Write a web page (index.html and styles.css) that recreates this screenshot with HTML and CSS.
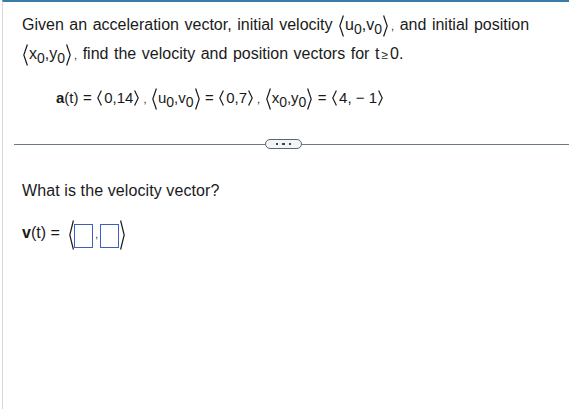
FILE: index.html
```html
<!DOCTYPE html>
<html>
<head>
<meta charset="utf-8">
<link rel="stylesheet" href="styles.css">
</head>
<body>
<div class="frame">
  <div class="question">
    <p class="intro">Given an acceleration vector, initial velocity <span class="vec"><svg class="br" viewBox="0 0 5 22"><polyline points="4.4,0.5 0.8,11 4.4,21.5"/></svg><span class="m">u<sub>0</sub>,v<sub>0</sub></span><svg class="br" viewBox="0 0 5 22"><polyline points="0.6,0.5 4.2,11 0.6,21.5"/></svg></span><span class="cm">,</span> and initial position<br><span class="vec"><svg class="br" viewBox="0 0 5 22"><polyline points="4.4,0.5 0.8,11 4.4,21.5"/></svg><span class="m">x<sub>0</sub>,y<sub>0</sub></span><svg class="br" viewBox="0 0 5 22"><polyline points="0.6,0.5 4.2,11 0.6,21.5"/></svg></span><span class="cm">,</span> find the velocity and position vectors for t<span class="ge">≥</span>0.</p>
    <p class="eq"><b>a</b>(t) = <span class="vec"><svg class="br sm" viewBox="0 0 5 16"><polyline points="4.4,0.5 0.8,8 4.4,15.5"/></svg>0,14<svg class="br sm" viewBox="0 0 5 16"><polyline points="0.6,0.5 4.2,8 0.6,15.5"/></svg></span><span class="cm">,</span> <span class="vec"><svg class="br" viewBox="0 0 5 22"><polyline points="4.4,0.5 0.8,11 4.4,21.5"/></svg><span class="m">u<sub>0</sub>,v<sub>0</sub></span><svg class="br" viewBox="0 0 5 22"><polyline points="0.6,0.5 4.2,11 0.6,21.5"/></svg></span> = <span class="vec"><svg class="br sm" viewBox="0 0 5 16"><polyline points="4.4,0.5 0.8,8 4.4,15.5"/></svg>0,7<svg class="br sm" viewBox="0 0 5 16"><polyline points="0.6,0.5 4.2,8 0.6,15.5"/></svg></span><span class="cm">,</span> <span class="vec"><svg class="br" viewBox="0 0 5 22"><polyline points="4.4,0.5 0.8,11 4.4,21.5"/></svg><span class="m">x<sub>0</sub>,y<sub>0</sub></span><svg class="br" viewBox="0 0 5 22"><polyline points="0.6,0.5 4.2,11 0.6,21.5"/></svg></span> = <span class="vec"><svg class="br sm" viewBox="0 0 5 16"><polyline points="4.4,0.5 0.8,8 4.4,15.5"/></svg>4, − 1<svg class="br sm" viewBox="0 0 5 16"><polyline points="0.6,0.5 4.2,8 0.6,15.5"/></svg></span></p>
  </div>
  <div class="sep">
    <div class="rule left"></div>
    <div class="pill"><span></span><span></span><span></span></div>
    <div class="rule"></div>
  </div>
  <div class="part">
    <p class="ask">What is the velocity vector?</p>
    <p class="ans"><b>v</b>(t) = <svg class="br big" viewBox="0 0 5 30"><polyline points="4.4,0.5 0.8,15 4.4,29.5"/></svg><span class="box"></span><span class="cm2">,</span><span class="box"></span><svg class="br big end" viewBox="0 0 5 30"><polyline points="0.6,0.5 4.2,15 0.6,29.5"/></svg></p>
  </div>
</div>
</body>
</html>
```
FILE: styles.css
```css
html, body {
  margin: 0;
  padding: 0;
  background: #fff;
}
body {
  font-family: "Liberation Sans", Arial, sans-serif;
  font-size: 16px;
  color: #1a1a1a;
  width: 569px;
  height: 411px;
  overflow: hidden;
}
.frame {
  border-top: 2px solid #3a7ba8;
  margin-left: 2px;
  border-left: 1px solid #d5d9de;
  height: 409px;
  box-sizing: border-box;
}
.question {
  padding: 9px 0 0 19px;
}
p { margin: 0; }
.intro {
  line-height: 28px;
  word-spacing: 1.1px;
}
.vec {
  display: inline-block;
  line-height: 16px;
  white-space: nowrap;
  word-spacing: 0;
}
.m sub {
  font-size: 14px;
  vertical-align: -4px;
  line-height: 0;
}
.br {
  width: 5px;
  height: 22px;
  fill: none;
  stroke: #1a1a1a;
  stroke-width: 1.2;
  vertical-align: -7px;
  margin: 0 1px;
}
.br.sm {
  height: 16px;
  vertical-align: -3px;
  margin: 0 2px 0 1px;
}
.cm {
  font-size: 11px;
  margin-left: 2px;
}
.ge {
  font-size: 12px;
  margin: 0 2px;
}
.eq {
  margin: 15px 0 0 34px;
  line-height: 28px;
  font-size: 15px;
  word-spacing: 0.3px;
}
.sep {
  display: flex;
  align-items: center;
  margin: 26px -14px 0 11px;
}
.rule {
  flex: 1;
  height: 1px;
  background: #6e7884;
}
.rule.left {
  flex: 0 0 251px;
}
.pill {
  width: 35px;
  height: 8px;
  border: 1.5px solid #5d6772;
  border-radius: 6px;
  background: #f2f4f6;
  display: flex;
  justify-content: center;
  align-items: center;
  gap: 4px;
}
.pill span {
  width: 2.5px;
  height: 2.5px;
  background: #3b4450;
}
.part {
  padding: 32px 0 0 19px;
}
.ask {
  line-height: 20px;
  letter-spacing: 0.1px;
}
.ans {
  margin-top: 16px;
  line-height: 32px;
}
.br.big {
  height: 30px;
  vertical-align: -12px;
  margin: 0 0 0 5px;
}
.br.big.end {
  margin: 0 0 0 1px;
}
.box {
  display: inline-block;
  width: 17px;
  height: 22px;
  border: 1.5px solid #3f5fbf;
  vertical-align: -10px;
}
.cm2 {
  font-size: 10px;
  margin: 0 2px 0 2px;
}
```
